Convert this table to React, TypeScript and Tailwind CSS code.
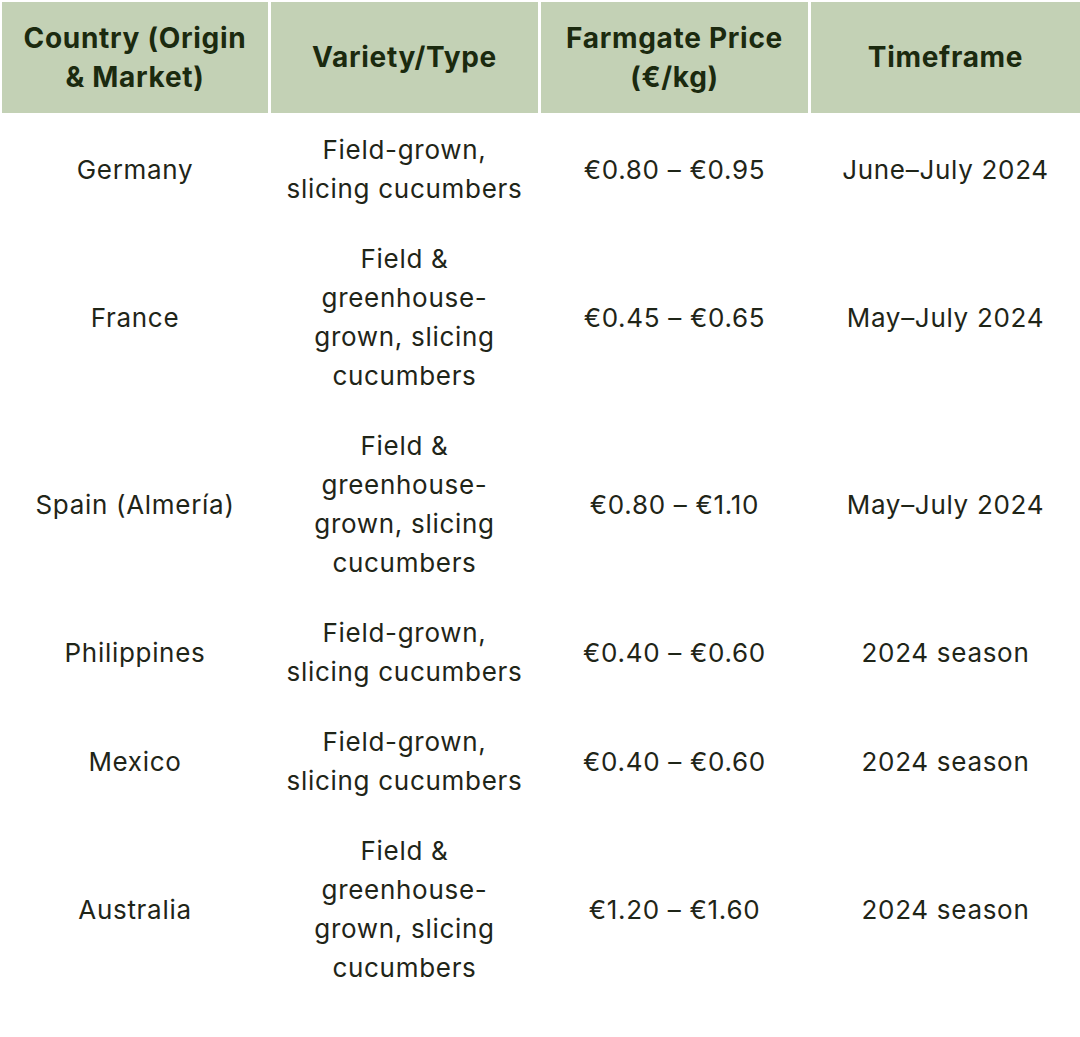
const headers: string[][] = [
  ["Country (Origin", "& Market)"],
  ["Variety/Type"],
  ["Farmgate Price", "(€/kg)"],
  ["Timeframe"],
];

const rows: string[][][] = [
  [["Germany"], ["Field-grown,", "slicing cucumbers"], ["€0.80 – €0.95"], ["June–July 2024"]],
  [["France"], ["Field &", "greenhouse-", "grown, slicing", "cucumbers"], ["€0.45 – €0.65"], ["May–July 2024"]],
  [["Spain (Almería)"], ["Field &", "greenhouse-", "grown, slicing", "cucumbers"], ["€0.80 – €1.10"], ["May–July 2024"]],
  [["Philippines"], ["Field-grown,", "slicing cucumbers"], ["€0.40 – €0.60"], ["2024 season"]],
  [["Mexico"], ["Field-grown,", "slicing cucumbers"], ["€0.40 – €0.60"], ["2024 season"]],
  [["Australia"], ["Field &", "greenhouse-", "grown, slicing", "cucumbers"], ["€1.20 – €1.60"], ["2024 season"]],
];

function Lines({ lines }: { lines: string[] }) {
  return (
    <>
      {lines.map((l, i) => (
        <span key={i} className="block whitespace-nowrap">
          {l}
        </span>
      ))}
    </>
  );
}

export default function App() {
  return (
    <div className="min-h-[1037px] w-[1080px] bg-white pl-[2px] pt-[2px] font-['Inter','Liberation_Sans',sans-serif]">
      <div className="grid grid-cols-[266px_267px_267px_269px] gap-x-[3px]">
        {/* Header */}
        {headers.map((h, i) => (
          <div
            key={i}
            className="flex h-[111px] items-center justify-center bg-[#c3d1b5] text-center text-[28px] font-bold leading-[39px] tracking-[0.7px] text-[#1b2a0f]"
          >
            <div>
              <Lines lines={h} />
            </div>
          </div>
        ))}

        {/* Body */}
        {rows.map((row, r) =>
          row.map((cell, c) => (
            <div
              key={`${r}-${c}`}
              className="flex items-center justify-center pt-[17px] pb-[14px] text-center text-[26px] leading-[39px] tracking-[0.7px] text-[#1f2518]"
            >
              <div>
                <Lines lines={cell} />
              </div>
            </div>
          ))
        )}
      </div>
    </div>
  );
}
